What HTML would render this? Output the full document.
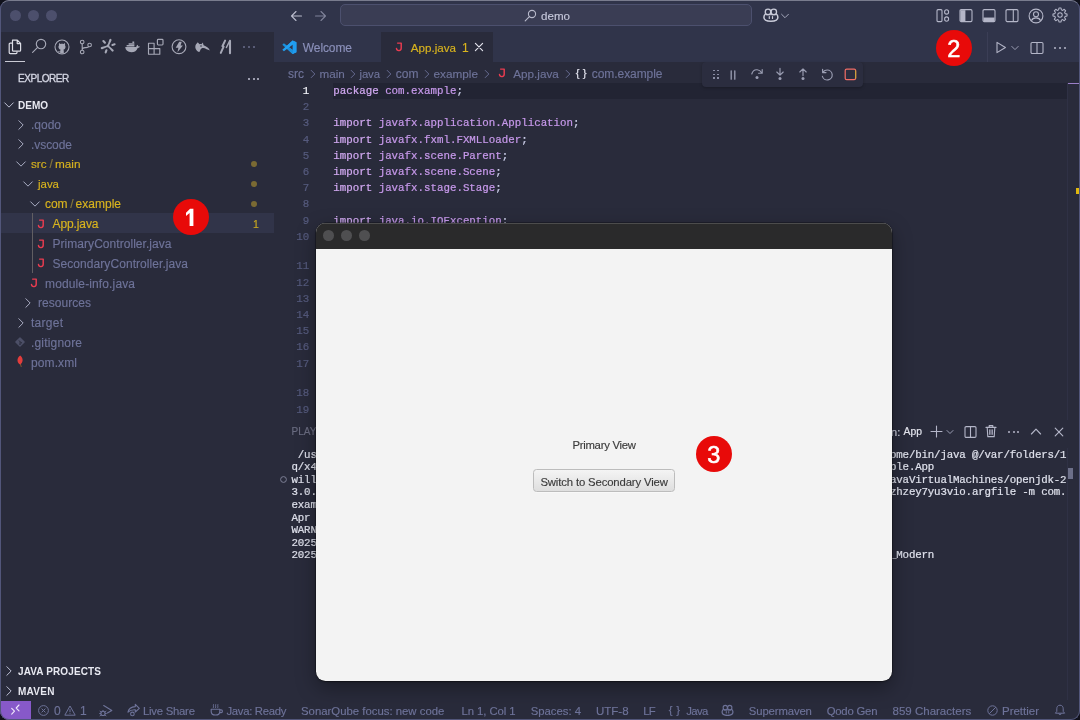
<!DOCTYPE html>
<html><head><meta charset="utf-8"><title>demo</title>
<style>
*{box-sizing:border-box;margin:0;padding:0}
html,body{width:1080px;height:720px;overflow:hidden;background:#10111b;font-family:"Liberation Sans",sans-serif;}
.b{position:absolute;display:block}
.t{position:absolute;white-space:pre;display:block}
#win{position:absolute;left:0;top:0;width:1080px;height:720px;background:#292b3b;border-radius:9px;overflow:hidden;will-change:transform}
#wb{position:absolute;left:0;top:0;width:1080px;height:720px;border:1px solid #52567a;border-top-color:#797c8e;border-radius:9px;pointer-events:none}
#fx{position:absolute;left:0;top:0;width:1080px;height:720px;will-change:transform}
#top{position:absolute;left:0;top:0;width:1080px;height:720px;will-change:transform}
.badge{position:absolute;width:36.2px;height:36.2px;border-radius:50%;background:#e80a09;color:#fff;font-weight:400;font-size:23.6px;line-height:38.2px;text-align:center;-webkit-text-stroke:.55px #fff}
</style></head><body>
<div id="win">
<div class="b" style="left:0px;top:0px;width:1080px;height:32px;background:#30344a;"></div>
<div class="b" style="left:10.0px;top:10px;width:11px;height:11px;background:#4c4f6c;border-radius:50%"></div>
<div class="b" style="left:28.0px;top:10px;width:11px;height:11px;background:#4c4f6c;border-radius:50%"></div>
<div class="b" style="left:46.0px;top:10px;width:11px;height:11px;background:#4c4f6c;border-radius:50%"></div>
<svg class="b" style="left:290px;top:10px;" width="13" height="12" viewBox="0 0 13 12" preserveAspectRatio="none"><path d="M6 1.5 L1.5 6 L6 10.5 M1.5 6 H11.5" fill="none" stroke="#b9bbcc" stroke-width="1.1" stroke-linecap="round" stroke-linejoin="round"/></svg>
<svg class="b" style="left:314px;top:10px;" width="13" height="12" viewBox="0 0 13 12" preserveAspectRatio="none"><path d="M7 1.5 L11.5 6 L7 10.5 M11.5 6 H1.5" fill="none" stroke="#7f8299" stroke-width="1.1" stroke-linecap="round" stroke-linejoin="round"/></svg>
<div class="b" style="left:340px;top:4px;width:412px;height:22px;background:#3a3d54;border:1px solid #4c506e;border-radius:5px"></div>
<svg class="b" style="left:524px;top:9px;" width="13" height="13" viewBox="0 0 13 13" preserveAspectRatio="none"><circle cx="8" cy="5" r="3.6" fill="none" stroke="#b9bbcc" stroke-width="1.1"/><path d="M5.4 7.6 L1.2 11.8" stroke="#b9bbcc" stroke-width="1.1" stroke-linecap="round"/></svg>
<svg class="b" style="left:761px;top:6px;" width="20" height="18" viewBox="761 6 20 18" preserveAspectRatio="none"><path d="M765.4 14 C764.3 15 763.9 16.2 763.9 17.3 C763.9 19.9 767 21.3 770.9 21.3 C774.8 21.3 777.9 19.9 777.9 17.3 C777.9 16.2 777.5 15 776.4 14" fill="none" stroke="#c9cbd9" stroke-width="1.5" stroke-linecap="round"/><circle cx="768" cy="11.9" r="2.75" fill="none" stroke="#c9cbd9" stroke-width="1.3"/><circle cx="773.8" cy="11.9" r="2.75" fill="none" stroke="#c9cbd9" stroke-width="1.3"/><path d="M766.2 14.7 H775.6" stroke="#c9cbd9" stroke-width="1" /><path d="M769.3 16.5 V18.4 M772.5 16.5 V18.4" stroke="#c9cbd9" stroke-width="1.2" stroke-linecap="round"/></svg>
<svg class="b" style="left:779.3px;top:9.7px;" width="12" height="12" viewBox="-6 -6 12 12" preserveAspectRatio="none"><path d="M-3.4 -1.70 L0 1.70 L3.4 -1.70" fill="none" stroke="#a4a7bb" stroke-width="1" stroke-linecap="round" stroke-linejoin="round"/></svg>
<svg class="b" style="left:936px;top:8.3px;" width="14" height="15.2" viewBox="0 0 14 14" preserveAspectRatio="none"><rect x="1" y="1.5" width="5" height="11" rx="1" fill="none" stroke="#b4b6c8" stroke-width="1.1"/><circle cx="10.6" cy="3.6" r="2" fill="none" stroke="#b4b6c8" stroke-width="1.1"/><circle cx="10.6" cy="10.2" r="2" fill="none" stroke="#b4b6c8" stroke-width="1.1"/></svg>
<svg class="b" style="left:958.5px;top:8.3px;" width="14" height="15.2" viewBox="0 0 14 14" preserveAspectRatio="none"><rect x="1" y="1.5" width="12" height="11" rx="1.2" fill="none" stroke="#b4b6c8" stroke-width="1.1"/><rect x="1.4" y="2" width="5" height="10" fill="#b4b6c8"/></svg>
<svg class="b" style="left:982px;top:8.3px;" width="14" height="15.2" viewBox="0 0 14 14" preserveAspectRatio="none"><rect x="1" y="1.5" width="12" height="11" rx="1.2" fill="none" stroke="#b4b6c8" stroke-width="1.1"/><rect x="1.5" y="8.8" width="11" height="3.3" fill="#b4b6c8"/></svg>
<svg class="b" style="left:1005px;top:8.3px;" width="14" height="15.2" viewBox="0 0 14 14" preserveAspectRatio="none"><rect x="1" y="1.5" width="12" height="11" rx="1.2" fill="none" stroke="#b4b6c8" stroke-width="1.1"/><path d="M8.3 1.5 V12.5" stroke="#b4b6c8" stroke-width="1.1"/></svg>
<svg class="b" style="left:1028px;top:7.5px;" width="16" height="16" viewBox="0 0 16 16" preserveAspectRatio="none"><circle cx="8" cy="8" r="6.9" fill="none" stroke="#b4b6c8" stroke-width="1.1"/><circle cx="8" cy="6.2" r="2.5" fill="none" stroke="#b4b6c8" stroke-width="1.1"/><path d="M3.4 12.8 C4.2 10.6 5.8 9.9 8 9.9 C10.2 9.9 11.8 10.6 12.6 12.8" fill="none" stroke="#b4b6c8" stroke-width="1.1"/></svg>
<svg class="b" style="left:1051.5px;top:7.3px;" width="16" height="16" viewBox="-8 -8 16 16" preserveAspectRatio="none"><path d="M-1.37 -5.12 L-1.05 -7.02 L1.05 -7.02 L1.37 -5.12 L2.65 -4.59 L4.22 -5.71 L5.71 -4.22 L4.59 -2.65 L5.12 -1.37 L7.02 -1.05 L7.02 1.05 L5.12 1.37 L4.59 2.65 L5.71 4.22 L4.22 5.71 L2.65 4.59 L1.37 5.12 L1.05 7.02 L-1.05 7.02 L-1.37 5.12 L-2.65 4.59 L-4.22 5.71 L-5.71 4.22 L-4.59 2.65 L-5.12 1.37 L-7.02 1.05 L-7.02 -1.05 L-5.12 -1.37 L-4.59 -2.65 L-5.71 -4.22 L-4.22 -5.71 L-2.65 -4.59Z" fill="none" stroke="#b4b6c8" stroke-width="1.05" stroke-linejoin="round"/><circle r="2.2" fill="none" stroke="#b4b6c8" stroke-width="1.05"/></svg>
<div class="b" style="left:0px;top:32px;width:274px;height:669px;background:#292b3b;"></div>
<svg class="b" style="left:7px;top:39px;" width="16" height="16" viewBox="0 0 16 16" preserveAspectRatio="none"><path d="M5.5 1.2 H10.3 L13.6 4.4 V11.2 A1 1 0 0 1 12.6 12.2 H6.5 A1 1 0 0 1 5.5 11.2 Z M10.2 1.4 V4.6 H13.4" fill="none" stroke="#dcdde6" stroke-width="1.2" stroke-linejoin="round"/><path d="M5.2 4.2 H3.2 A1 1 0 0 0 2.2 5.2 V13.6 A1 1 0 0 0 3.2 14.6 H9 A1 1 0 0 0 10 13.6 V12.4" fill="none" stroke="#dcdde6" stroke-width="1.2" stroke-linejoin="round"/></svg>
<div class="b" style="left:5px;top:60.6px;width:20px;height:1.4px;background:#c9cad4;"></div>
<svg class="b" style="left:30.6px;top:38.4px;" width="16" height="16" viewBox="0 0 16 16" preserveAspectRatio="none"><circle cx="10" cy="6" r="4.7" fill="none" stroke="#a6a8b6" stroke-width="1.15"/><path d="M6.6 9.4 L1.6 14.4" stroke="#a6a8b6" stroke-width="1.15" stroke-linecap="round"/></svg>
<svg class="b" style="left:54px;top:39px;" width="16" height="16" viewBox="0 0 16 16" preserveAspectRatio="none"><circle cx="8" cy="8" r="7" fill="none" stroke="#a6a8b6" stroke-width="1.1"/><path d="M5.2 4.1 L6.4 5 C7.4 4.7 8.6 4.7 9.6 5 L10.8 4.1 C11.2 5 11.2 5.6 11 6.2 C11.6 7 11.7 8 11.3 9 C10.9 10 10.1 10.5 9.4 10.7 C9.8 11.2 9.8 11.8 9.8 12.4 V14.4 H6.2 V13.2 C5.2 13.5 4.5 13 4.1 12 L4.8 12 C5.2 12.5 5.6 12.6 6.2 12.4 C6.2 11.8 6.3 11.2 6.6 10.7 C5.9 10.5 5.1 10 4.7 9 C4.3 8 4.4 7 5 6.2 C4.8 5.6 4.8 5 5.2 4.1Z" fill="#a6a8b6"/></svg>
<svg class="b" style="left:78px;top:38.8px;" width="16" height="16" viewBox="0 0 16 16" preserveAspectRatio="none"><circle cx="4.2" cy="3" r="1.8" fill="none" stroke="#a6a8b6" stroke-width="1.1"/><circle cx="4.2" cy="13" r="1.8" fill="none" stroke="#a6a8b6" stroke-width="1.1"/><circle cx="11.6" cy="6" r="1.8" fill="none" stroke="#a6a8b6" stroke-width="1.1"/><path d="M4.2 4.8 V11.2 M4.2 10.4 C4.2 8.6 6 8.8 8 8.6 C9.8 8.4 10.6 8 11 7.6" fill="none" stroke="#a6a8b6" stroke-width="1.1"/></svg>
<svg class="b" style="left:100.3px;top:38.3px;" width="16" height="16" viewBox="-8 -8 16 16" preserveAspectRatio="none"><path d="M-0.7 -0.4 L-1.1 -6.5 A1.1 1.1 0 0 1 1.1 -6.5 L0.7 -0.4Z" fill="#a6a8b6" transform="rotate(22)"/><path d="M-0.7 -0.4 L-1.1 -6.5 A1.1 1.1 0 0 1 1.1 -6.5 L0.7 -0.4Z" fill="#a6a8b6" transform="rotate(135)"/><path d="M-0.7 -0.4 L-1.1 -6.5 A1.1 1.1 0 0 1 1.1 -6.5 L0.7 -0.4Z" fill="#a6a8b6" transform="rotate(251)"/><path d="M0 -4.5 L0 -6.8" stroke="#a6a8b6" stroke-width="2.1" stroke-linecap="round" transform="rotate(76)"/><path d="M0 -4.5 L0 -6.8" stroke="#a6a8b6" stroke-width="2.1" stroke-linecap="round" transform="rotate(200)"/><path d="M0 -4.5 L0 -6.8" stroke="#a6a8b6" stroke-width="2.1" stroke-linecap="round" transform="rotate(317)"/><circle r="1.4" fill="#a6a8b6"/></svg>
<svg class="b" style="left:124px;top:40px;" width="17" height="14" viewBox="124 40 17 14" preserveAspectRatio="none"><path d="M125.2 47 H136.2 C136.3 46 136.8 45.2 137.5 44.7 C138 45.2 138.2 45.8 138.1 46.4 C138.7 46.2 139.4 46.3 139.8 46.7 C139.4 47.5 138.6 47.9 137.7 47.9 C136.8 50.6 134.6 52.2 131.3 52.2 C127.8 52.2 125.5 50.4 125.2 47Z M126.6 45.1 H134.4 V46.6 H126.6Z M128.6 43.3 H134.4 V44.7 H128.6Z M132.4 41.6 H134.2 V42.9 H132.4Z" fill="#a6a8b6"/></svg>
<svg class="b" style="left:146px;top:37px;" width="19" height="19" viewBox="146 37 19 19" preserveAspectRatio="none"><path d="M148.5 43.2 H154.1 V48.6 H159.8 V54.2 H148.5Z M148.5 48.6 H154.1 V54.2" fill="none" stroke="#a6a8b6" stroke-width="1.15" stroke-linejoin="round"/><rect x="157.4" y="39.4" width="5.6" height="5.6" rx=".9" fill="none" stroke="#a6a8b6" stroke-width="1.15"/></svg>
<svg class="b" style="left:170px;top:38px;" width="18" height="18" viewBox="170 38 18 18" preserveAspectRatio="none"><circle cx="179" cy="46.7" r="6.9" fill="none" stroke="#a6a8b6" stroke-width="1.1"/><path d="M179.2 41.8 H181.8 L180.5 45.5 H182.9 L177.5 52.3 L178.4 47.7 H175.7Z" fill="#a6a8b6"/></svg>
<svg class="b" style="left:193px;top:40px;" width="19" height="14" viewBox="193 40 19 14" preserveAspectRatio="none"><path d="M197.7 42.2 L199.6 44.2 C200.2 44 200.8 44 201.4 44.2 L202.8 42.6 L203.6 45.2 C205 45.8 206.4 46.6 207.6 47.6 C208.6 48.4 209.4 49.4 209.8 50.4 C208.6 50 207.6 49.6 206.6 49.2 C205.4 48.4 204.2 48 203.2 48 C202 48 201 48.6 200.6 49.4 C200.2 50.2 199.9 51.2 199.4 52.1 C198.6 51.9 197.8 51.5 197.2 50.9 C196 49.8 195.3 48.4 195.3 47 C195.3 45.8 195.6 44.8 196.2 44 C196.8 43.4 197.3 42.8 197.7 42.2Z" fill="#a6a8b6"/><circle cx="201" cy="46.1" r=".75" fill="#292b3b"/></svg>
<svg class="b" style="left:218px;top:38px;" width="16" height="18" viewBox="218 38 16 18" preserveAspectRatio="none"><path d="M225.1 40.6 L222.4 46.2 M223.6 46.6 L220.8 52.9" stroke="#a6a8b6" stroke-width="2" stroke-linecap="round" fill="none"/><path d="M230 40.9 V53.2" stroke="#a6a8b6" stroke-width="2.1" stroke-linecap="round"/><path d="M229.6 41.2 L226.4 47.5" stroke="#a6a8b6" stroke-width="1.5" stroke-linecap="round"/></svg>
<div class="b" style="left:243.4px;top:46.2px;width:2px;height:2px;background:#6a6e8d;border-radius:50%"></div>
<div class="b" style="left:248px;top:46.2px;width:2px;height:2px;background:#6a6e8d;border-radius:50%"></div>
<div class="b" style="left:252.6px;top:46.2px;width:2px;height:2px;background:#6a6e8d;border-radius:50%"></div>
<div class="b" style="left:247.9px;top:77.7px;width:2px;height:2px;background:#c3c5d6;border-radius:50%"></div>
<div class="b" style="left:252.5px;top:77.7px;width:2px;height:2px;background:#c3c5d6;border-radius:50%"></div>
<div class="b" style="left:257.1px;top:77.7px;width:2px;height:2px;background:#c3c5d6;border-radius:50%"></div>
<svg class="b" style="left:2.8000000000000007px;top:98.6px;" width="12" height="12" viewBox="-6 -6 12 12" preserveAspectRatio="none"><path d="M-4.3 -2.15 L0 2.15 L4.3 -2.15" fill="none" stroke="#bcbfd2" stroke-width="1" stroke-linecap="round" stroke-linejoin="round"/></svg>
<div class="b" style="left:0px;top:213px;width:274px;height:20px;background:#313449;"></div>
<div class="b" style="left:32px;top:213px;width:1px;height:59.5px;background:#615e62;"></div>
<svg class="b" style="left:15.2px;top:118.5px;" width="12" height="12" viewBox="-6 -6 12 12" preserveAspectRatio="none"><path d="M-2.15 -4.3 L2.15 0 L-2.15 4.3" fill="none" stroke="#a9acc2" stroke-width="1" stroke-linecap="round" stroke-linejoin="round"/></svg>
<svg class="b" style="left:15.2px;top:138.33px;" width="12" height="12" viewBox="-6 -6 12 12" preserveAspectRatio="none"><path d="M-2.15 -4.3 L2.15 0 L-2.15 4.3" fill="none" stroke="#a9acc2" stroke-width="1" stroke-linecap="round" stroke-linejoin="round"/></svg>
<svg class="b" style="left:14.600000000000001px;top:158.06px;" width="12" height="12" viewBox="-6 -6 12 12" preserveAspectRatio="none"><path d="M-4.3 -2.15 L0 2.15 L4.3 -2.15" fill="none" stroke="#a9acc2" stroke-width="1" stroke-linecap="round" stroke-linejoin="round"/></svg>
<svg class="b" style="left:21.6px;top:177.89px;" width="12" height="12" viewBox="-6 -6 12 12" preserveAspectRatio="none"><path d="M-4.3 -2.15 L0 2.15 L4.3 -2.15" fill="none" stroke="#a9acc2" stroke-width="1" stroke-linecap="round" stroke-linejoin="round"/></svg>
<svg class="b" style="left:28.6px;top:197.71999999999997px;" width="12" height="12" viewBox="-6 -6 12 12" preserveAspectRatio="none"><path d="M-4.3 -2.15 L0 2.15 L4.3 -2.15" fill="none" stroke="#a9acc2" stroke-width="1" stroke-linecap="round" stroke-linejoin="round"/></svg>
<svg class="b" style="left:37.1px;top:218.74999999999997px;" width="8" height="10" viewBox="0 0 8 10" preserveAspectRatio="none"><path d="M2.6 1.1 H6.2 V6 A2.35 2.35 0 0 1 1.5 6.5" fill="none" stroke="#ea3c50" stroke-width="1.45" stroke-linecap="round" stroke-linejoin="round"/></svg>
<svg class="b" style="left:37.1px;top:238.57999999999996px;" width="8" height="10" viewBox="0 0 8 10" preserveAspectRatio="none"><path d="M2.6 1.1 H6.2 V6 A2.35 2.35 0 0 1 1.5 6.5" fill="none" stroke="#ea3c50" stroke-width="1.45" stroke-linecap="round" stroke-linejoin="round"/></svg>
<svg class="b" style="left:37.1px;top:258.4099999999999px;" width="8" height="10" viewBox="0 0 8 10" preserveAspectRatio="none"><path d="M2.6 1.1 H6.2 V6 A2.35 2.35 0 0 1 1.5 6.5" fill="none" stroke="#ea3c50" stroke-width="1.45" stroke-linecap="round" stroke-linejoin="round"/></svg>
<svg class="b" style="left:29.6px;top:278.2399999999999px;" width="8" height="10" viewBox="0 0 8 10" preserveAspectRatio="none"><path d="M2.6 1.1 H6.2 V6 A2.35 2.35 0 0 1 1.5 6.5" fill="none" stroke="#ea3c50" stroke-width="1.45" stroke-linecap="round" stroke-linejoin="round"/></svg>
<svg class="b" style="left:22.2px;top:296.9699999999999px;" width="12" height="12" viewBox="-6 -6 12 12" preserveAspectRatio="none"><path d="M-2.15 -4.3 L2.15 0 L-2.15 4.3" fill="none" stroke="#a9acc2" stroke-width="1" stroke-linecap="round" stroke-linejoin="round"/></svg>
<svg class="b" style="left:15.2px;top:316.7999999999999px;" width="12" height="12" viewBox="-6 -6 12 12" preserveAspectRatio="none"><path d="M-2.15 -4.3 L2.15 0 L-2.15 4.3" fill="none" stroke="#a9acc2" stroke-width="1" stroke-linecap="round" stroke-linejoin="round"/></svg>
<svg class="b" style="left:13.6px;top:336.4299999999999px;" width="12" height="12" viewBox="-6 -6 12 12" preserveAspectRatio="none"><rect x="-3.6" y="-3.6" width="7.2" height="7.2" rx=".7" fill="#4c4f67" transform="rotate(45)"/><path d="M-1.4 -1.6 L1.2 0.6 M0 -0.4 V2.2" stroke="#2d2f40" stroke-width=".9"/><circle cx="1.3" cy=".7" r=".8" fill="#2d2f40"/><circle cx="0" cy="2.2" r=".8" fill="#2d2f40"/></svg>
<svg class="b" style="left:14.7px;top:354.15999999999985px;" width="10" height="14" viewBox="-5 -8 10 14" preserveAspectRatio="none"><path d="M0.3 1.6 L1.2 4.6" stroke="#8a5a30" stroke-width=".9" stroke-linecap="round"/><path d="M0.2 -6.6 C1.8 -5.6 2.8 -3.6 2.6 -1.6 C2.4 0.2 1.4 1.8 0.2 2.4 C-1.2 1.8 -2.4 0.4 -2.5 -1.6 C-2.6 -3.6 -1.6 -5.6 0.2 -6.6Z" fill="#e33d3c"/></svg>
<div class="b" style="left:250.5px;top:160.9px;width:6px;height:6px;background:#7a6a33;border-radius:50%"></div>
<div class="b" style="left:250.5px;top:180.7px;width:6px;height:6px;background:#7a6a33;border-radius:50%"></div>
<div class="b" style="left:250.5px;top:200.5px;width:6px;height:6px;background:#7a6a33;border-radius:50%"></div>
<svg class="b" style="left:2.8000000000000007px;top:664.9px;" width="12" height="12" viewBox="-6 -6 12 12" preserveAspectRatio="none"><path d="M-2.15 -4.3 L2.15 0 L-2.15 4.3" fill="none" stroke="#bcbfd2" stroke-width="1" stroke-linecap="round" stroke-linejoin="round"/></svg>
<svg class="b" style="left:2.8000000000000007px;top:684.7px;" width="12" height="12" viewBox="-6 -6 12 12" preserveAspectRatio="none"><path d="M-2.15 -4.3 L2.15 0 L-2.15 4.3" fill="none" stroke="#bcbfd2" stroke-width="1" stroke-linecap="round" stroke-linejoin="round"/></svg>
<div class="b" style="left:274px;top:32px;width:806px;height:30px;background:#30344a;"></div>
<div class="b" style="left:381px;top:32px;width:112px;height:30px;background:#292b3b;"></div>
<svg class="b" style="left:282.4px;top:39.8px;" width="15" height="14.4" viewBox="0 0 15 14" preserveAspectRatio="none"><path d="M10.6 0.4 L14.4 2.2 V11.8 L10.6 13.6 L3.6 7 Z" fill="#2aa5f5"/><path d="M10.6 0.4 L14.4 2.2 V11.8 L10.6 13.6 Z" fill="#1f9cf0"/><path d="M10.6 4.2 L6.8 7 L10.6 9.8Z" fill="#30344a"/><path d="M1.9 3.1 L0.3 4.5 L10.6 13.6 L11.2 9.9Z" fill="#1a90dd"/><path d="M1.9 10.9 L0.3 9.5 L10.6 0.4 L11.2 4.1Z" fill="#22a0f2"/></svg>
<svg class="b" style="left:395.40000000000003px;top:42.4px;" width="8" height="10" viewBox="0 0 8 10" preserveAspectRatio="none"><path d="M2.6 1.1 H6.2 V6 A2.35 2.35 0 0 1 1.5 6.5" fill="none" stroke="#ea3c50" stroke-width="1.45" stroke-linecap="round" stroke-linejoin="round"/></svg>
<svg class="b" style="left:474.4px;top:42.2px;" width="10" height="10" viewBox="0 0 10 10" preserveAspectRatio="none"><path d="M1.4 1.4 L8.6 8.6 M8.6 1.4 L1.4 8.6" stroke="#e4e5ee" stroke-width="1.15" stroke-linecap="round"/></svg>
<div class="b" style="left:987px;top:32px;width:1px;height:30px;background:#3b3e56;"></div>
<svg class="b" style="left:994.5px;top:41px;" width="12" height="13" viewBox="0 0 12 13" preserveAspectRatio="none"><path d="M2 1.4 L10.4 6.5 L2 11.6Z" fill="none" stroke="#b4b6c8" stroke-width="1.1" stroke-linejoin="round"/></svg>
<svg class="b" style="left:1009px;top:41.8px;" width="12" height="12" viewBox="-6 -6 12 12" preserveAspectRatio="none"><path d="M-3.2 -1.60 L0 1.60 L3.2 -1.60" fill="none" stroke="#9a9db3" stroke-width="1" stroke-linecap="round" stroke-linejoin="round"/></svg>
<svg class="b" style="left:1029.5px;top:40.5px;" width="14" height="14" viewBox="0 0 14 14" preserveAspectRatio="none"><rect x="1" y="1.5" width="12" height="11" rx="1.2" fill="none" stroke="#b4b6c8" stroke-width="1.1"/><path d="M7 1.5 V12.5" stroke="#b4b6c8" stroke-width="1.1"/></svg>
<div class="b" style="left:1054.4px;top:46.6px;width:2px;height:2px;background:#b4b6c8;border-radius:50%"></div>
<div class="b" style="left:1059px;top:46.6px;width:2px;height:2px;background:#b4b6c8;border-radius:50%"></div>
<div class="b" style="left:1063.6px;top:46.6px;width:2px;height:2px;background:#b4b6c8;border-radius:50%"></div>
<div class="b" style="left:274px;top:62px;width:806px;height:21px;background:#292b3b;"></div>
<svg class="b" style="left:306.8px;top:68px;" width="12" height="12" viewBox="-6 -6 12 12" preserveAspectRatio="none"><path d="M-1.80 -3.6 L1.80 0 L-1.80 3.6" fill="none" stroke="#656a90" stroke-width="1" stroke-linecap="round" stroke-linejoin="round"/></svg>
<svg class="b" style="left:346.8px;top:68px;" width="12" height="12" viewBox="-6 -6 12 12" preserveAspectRatio="none"><path d="M-1.80 -3.6 L1.80 0 L-1.80 3.6" fill="none" stroke="#656a90" stroke-width="1" stroke-linecap="round" stroke-linejoin="round"/></svg>
<svg class="b" style="left:382.8px;top:68px;" width="12" height="12" viewBox="-6 -6 12 12" preserveAspectRatio="none"><path d="M-1.80 -3.6 L1.80 0 L-1.80 3.6" fill="none" stroke="#656a90" stroke-width="1" stroke-linecap="round" stroke-linejoin="round"/></svg>
<svg class="b" style="left:420.8px;top:68px;" width="12" height="12" viewBox="-6 -6 12 12" preserveAspectRatio="none"><path d="M-1.80 -3.6 L1.80 0 L-1.80 3.6" fill="none" stroke="#656a90" stroke-width="1" stroke-linecap="round" stroke-linejoin="round"/></svg>
<svg class="b" style="left:480.8px;top:68px;" width="12" height="12" viewBox="-6 -6 12 12" preserveAspectRatio="none"><path d="M-1.80 -3.6 L1.80 0 L-1.80 3.6" fill="none" stroke="#656a90" stroke-width="1" stroke-linecap="round" stroke-linejoin="round"/></svg>
<svg class="b" style="left:497.6px;top:68.4px;" width="8" height="10" viewBox="0 0 8 10" preserveAspectRatio="none"><path d="M2.6 1.1 H6.2 V6 A2.35 2.35 0 0 1 1.5 6.5" fill="none" stroke="#ea3c50" stroke-width="1.45" stroke-linecap="round" stroke-linejoin="round"/></svg>
<svg class="b" style="left:562.3px;top:68px;" width="12" height="12" viewBox="-6 -6 12 12" preserveAspectRatio="none"><path d="M-1.80 -3.6 L1.80 0 L-1.80 3.6" fill="none" stroke="#656a90" stroke-width="1" stroke-linecap="round" stroke-linejoin="round"/></svg>
<div class="b" style="left:333px;top:83px;width:734px;height:16px;background:#222433;"></div>
<div class="b" style="left:1067px;top:83px;width:1px;height:337px;background:#2f3145;"></div>
<div class="b" style="left:1068px;top:83px;width:12px;height:1.2px;background:#9b80c8;"></div>
<div class="b" style="left:1076px;top:188px;width:4px;height:6px;background:#e0b80e;"></div>
<div class="b" style="left:702px;top:62px;width:161px;height:24.5px;background:#2b2d3f;border-radius:4px;box-shadow:0 1px 3px rgba(0,0,0,.25)"></div>
<div class="b" style="left:713.45px;top:69.85px;width:1.5px;height:1.5px;background:#8a8da3;"></div>
<div class="b" style="left:713.45px;top:73.55px;width:1.5px;height:1.5px;background:#8a8da3;"></div>
<div class="b" style="left:713.45px;top:77.25px;width:1.5px;height:1.5px;background:#8a8da3;"></div>
<div class="b" style="left:717.05px;top:69.85px;width:1.5px;height:1.5px;background:#8a8da3;"></div>
<div class="b" style="left:717.05px;top:73.55px;width:1.5px;height:1.5px;background:#8a8da3;"></div>
<div class="b" style="left:717.05px;top:77.25px;width:1.5px;height:1.5px;background:#8a8da3;"></div>
<svg class="b" style="left:727px;top:68.5px;" width="12" height="12" viewBox="0 0 12 12" preserveAspectRatio="none"><path d="M4.2 1.8 V10.2 M7.8 1.8 V10.2" stroke="#9b9eb3" stroke-width="1.3" stroke-linecap="round"/></svg>
<svg class="b" style="left:749.5px;top:67px;" width="14" height="14" viewBox="0 0 14 14" preserveAspectRatio="none"><path d="M1.8 7 C2.6 3.8 5 2.6 7.2 2.8 C9.2 3 10.6 4 11.6 5.8 M12.2 2.6 V6.2 H8.6" fill="none" stroke="#9b9eb3" stroke-width="1.15" stroke-linecap="round" stroke-linejoin="round"/><circle cx="7" cy="10.6" r="1.5" fill="#9b9eb3"/></svg>
<svg class="b" style="left:773px;top:67px;" width="14" height="14" viewBox="0 0 14 14" preserveAspectRatio="none"><path d="M7 1.4 V8 M3.8 5 L7 8.2 L10.2 5" fill="none" stroke="#9b9eb3" stroke-width="1.15" stroke-linecap="round" stroke-linejoin="round"/><circle cx="7" cy="11.4" r="1.5" fill="#9b9eb3"/></svg>
<svg class="b" style="left:796px;top:67px;" width="14" height="14" viewBox="0 0 14 14" preserveAspectRatio="none"><path d="M7 8.6 V2 M3.8 5 L7 1.8 L10.2 5" fill="none" stroke="#9b9eb3" stroke-width="1.15" stroke-linecap="round" stroke-linejoin="round"/><circle cx="7" cy="11.4" r="1.5" fill="#9b9eb3"/></svg>
<svg class="b" style="left:819.5px;top:67.5px;" width="14" height="14" viewBox="0 0 14 14" preserveAspectRatio="none"><path d="M3 4.2 C4 2.8 5.4 2 7.2 2 A5 5 0 1 1 2.4 8.4 M2.6 1.2 V4.6 H6" fill="none" stroke="#9b9eb3" stroke-width="1.15" stroke-linecap="round" stroke-linejoin="round"/></svg>
<svg class="b" style="left:843.5px;top:68px;" width="13" height="13" viewBox="0 0 13 13" preserveAspectRatio="none"><rect x="1.2" y="1.2" width="10.4" height="10.4" rx="1.4" fill="none" stroke="#f26d66" stroke-width="1.2"/><path d="M11.6 2.6 V10.4" stroke="#caa23a" stroke-width="1.2"/></svg>
<div class="b" style="left:274px;top:420px;width:806px;height:281px;background:#292b3b;"></div>
<svg class="b" style="left:929.5px;top:424.5px;" width="13" height="13" viewBox="0 0 13 13" preserveAspectRatio="none"><path d="M6.5 1 V12 M1 6.5 H12" stroke="#b4b6c8" stroke-width="1.1" stroke-linecap="round"/></svg>
<svg class="b" style="left:944px;top:425.8px;" width="12" height="12" viewBox="-6 -6 12 12" preserveAspectRatio="none"><path d="M-3 -1.50 L0 1.50 L3 -1.50" fill="none" stroke="#9a9db3" stroke-width="1" stroke-linecap="round" stroke-linejoin="round"/></svg>
<svg class="b" style="left:964px;top:424.5px;" width="13" height="14" viewBox="0 0 13 14" preserveAspectRatio="none"><rect x="1" y="1.6" width="11" height="10.8" rx="1.2" fill="none" stroke="#b4b6c8" stroke-width="1.1"/><path d="M6.5 1.6 V12.4" stroke="#b4b6c8" stroke-width="1.1"/></svg>
<svg class="b" style="left:985px;top:424px;" width="12" height="14" viewBox="0 0 12 14" preserveAspectRatio="none"><path d="M1 3.4 H11 M4.2 3.2 V1.6 H7.8 V3.2 M2.2 3.6 L2.8 12.6 H9.2 L9.8 3.6" fill="none" stroke="#b4b6c8" stroke-width="1.1" stroke-linecap="round" stroke-linejoin="round"/><path d="M4.6 5.4 V10.8 M6 5.4 V10.8 M7.4 5.4 V10.8" stroke="#b4b6c8" stroke-width=".9"/></svg>
<div class="b" style="left:1007.9px;top:430.6px;width:2px;height:2px;background:#b4b6c8;border-radius:50%"></div>
<div class="b" style="left:1012.5px;top:430.6px;width:2px;height:2px;background:#b4b6c8;border-radius:50%"></div>
<div class="b" style="left:1017.1px;top:430.6px;width:2px;height:2px;background:#b4b6c8;border-radius:50%"></div>
<svg class="b" style="left:1030px;top:426.5px;" width="12" height="9" viewBox="0 0 12 9" preserveAspectRatio="none"><path d="M1.4 7 L6 2.2 L10.6 7" fill="none" stroke="#b4b6c8" stroke-width="1.15" stroke-linecap="round" stroke-linejoin="round"/></svg>
<svg class="b" style="left:1054px;top:426.5px;" width="10" height="10" viewBox="0 0 10 10" preserveAspectRatio="none"><path d="M1.2 1.2 L8.8 8.8 M8.8 1.2 L1.2 8.8" stroke="#b4b6c8" stroke-width="1.15" stroke-linecap="round"/></svg>
<div class="b" style="left:1067px;top:448px;width:1px;height:252px;background:#2f3145;"></div>
<div class="b" style="left:1068px;top:468px;width:4.5px;height:10.5px;background:#6c6f88;"></div>
<svg class="b" style="left:278.5px;top:474.8px;" width="9" height="9" viewBox="0 0 9 9" preserveAspectRatio="none"><circle cx="4.5" cy="4.5" r="2.9" fill="none" stroke="#7d8096" stroke-width="1"/></svg>
<div class="b" style="left:0px;top:701px;width:1080px;height:19px;background:#292b3b;"></div>
<div class="b" style="left:0px;top:701px;width:31px;height:19px;background:#8759c9;"></div>
<svg class="b" style="left:8px;top:702px;" width="16" height="16" viewBox="8 702 16 16" preserveAspectRatio="none"><path d="M11.7 708.3 L14.5 711.2 L11.7 714.2 M19 705 L16.2 708 L19 710.9" fill="none" stroke="#efe6fb" stroke-width="1.1" stroke-linecap="round" stroke-linejoin="round"/></svg>
<svg class="b" style="left:38.4px;top:704.7px;" width="11" height="11" viewBox="0 0 11 11" preserveAspectRatio="none"><circle cx="5.5" cy="5.5" r="4.9" fill="none" stroke="#6e7399" stroke-width="1"/><path d="M3.6 3.6 L7.4 7.4 M7.4 3.6 L3.6 7.4" stroke="#6e7399" stroke-width="1"/></svg>
<svg class="b" style="left:63.5px;top:704.8px;" width="12" height="11" viewBox="0 0 12 11" preserveAspectRatio="none"><path d="M6 1 L11.2 10.2 H0.8Z" fill="none" stroke="#6e7399" stroke-width="1" stroke-linejoin="round"/><path d="M6 4.2 V7.2 M6 8.3 V9" stroke="#6e7399" stroke-width="1"/></svg>
<svg class="b" style="left:98px;top:702px;" width="16" height="17" viewBox="98 702 16 17" preserveAspectRatio="none"><path d="M103.7 705.5 L111.8 710.4 L107.4 713" fill="none" stroke="#6e7399" stroke-width="1.15" stroke-linejoin="round" stroke-linecap="round"/><circle cx="103" cy="713.4" r="2.1" fill="none" stroke="#6e7399" stroke-width="1.1"/><path d="M100 711.2 L101.1 712 M99.6 713.5 H100.6 M100 715.8 L101.1 715 M106 711.2 L104.9 712 M106.4 713.5 H105.4 M106 715.8 L104.9 715 M103 710.4 V711.2" stroke="#6e7399" stroke-width=".9" stroke-linecap="round"/></svg>
<svg class="b" style="left:126px;top:702px;" width="16" height="17" viewBox="126 702 16 17" preserveAspectRatio="none"><path d="M135.3 704.4 L139.3 708.3 L135.3 712 V709.8 C132 709.6 129.8 710.4 128 712.2 C128.6 708.8 131 706.8 135.3 706.6Z" fill="none" stroke="#6e7399" stroke-width="1.15" stroke-linejoin="round"/><circle cx="132.4" cy="713.9" r="1.8" fill="none" stroke="#6e7399" stroke-width="1.1"/></svg>
<svg class="b" style="left:209px;top:702px;" width="16" height="17" viewBox="209 702 16 17" preserveAspectRatio="none"><path d="M211.2 709.2 H219.8 V711.4 C219.8 713.6 218 715 215.5 715 C213 715 211.2 713.6 211.2 711.4Z M219.8 709.9 H221.2 C222.8 709.9 222.8 712.6 221.2 712.6 H219.6" fill="none" stroke="#6e7399" stroke-width="1.15" stroke-linejoin="round"/><path d="M213.4 704.6 C212.9 705.6 214 706.4 213.4 707.6 M215.6 704.6 C215.1 705.6 216.2 706.4 215.6 707.6 M217.8 704.6 C217.3 705.6 218.4 706.4 217.8 707.6" fill="none" stroke="#6e7399" stroke-width=".9" stroke-linecap="round"/></svg>
<svg class="b" style="left:721.3px;top:704px;" width="13.2" height="12.4" viewBox="762.5 7.5 17 15" preserveAspectRatio="none"><path d="M765.4 14 C764.3 15 763.9 16.2 763.9 17.3 C763.9 19.9 767 21.3 770.9 21.3 C774.8 21.3 777.9 19.9 777.9 17.3 C777.9 16.2 777.5 15 776.4 14" fill="none" stroke="#6e7399" stroke-width="1.6" stroke-linecap="round"/><circle cx="768" cy="11.9" r="2.75" fill="none" stroke="#6e7399" stroke-width="1.4"/><circle cx="773.8" cy="11.9" r="2.75" fill="none" stroke="#6e7399" stroke-width="1.4"/><path d="M766.2 14.7 H775.6" stroke="#6e7399" stroke-width="1.1" /><path d="M769.3 16.5 V18.4 M772.5 16.5 V18.4" stroke="#6e7399" stroke-width="1.3" stroke-linecap="round"/></svg>
<svg class="b" style="left:986.5px;top:705px;" width="11" height="11" viewBox="0 0 11 11" preserveAspectRatio="none"><circle cx="5.5" cy="5.5" r="4.7" fill="none" stroke="#6e7399" stroke-width="1"/><path d="M2.2 8.8 L8.8 2.2" stroke="#6e7399" stroke-width="1"/></svg>
<svg class="b" style="left:1054.2px;top:703.8px;" width="12" height="12" viewBox="0 0 12 12" preserveAspectRatio="none"><path d="M6 1.2 C3.8 1.2 2.8 2.8 2.8 4.8 V7.4 L1.4 9.2 H10.6 L9.2 7.4 V4.8 C9.2 2.8 8.2 1.2 6 1.2Z M4.8 9.4 C4.8 11 7.2 11 7.2 9.4" fill="none" stroke="#6e7399" stroke-width="1" stroke-linejoin="round"/></svg>
<span class="t" style="left:541px;top:7.25px;font-size:11.59px;line-height:18px;color:#c5c7da;-webkit-text-stroke:0.15px #c5c7da;">demo</span>
<span class="t" style="left:18px;top:71.05px;font-size:10.02px;line-height:16px;color:#d4d6e3;letter-spacing:-0.461px;-webkit-text-stroke:.3px #d4d6e3;">EXPLORER</span>
<span class="t" style="left:18px;top:97.55px;font-size:10px;line-height:15px;color:#e8e9f1;font-weight:700;">DEMO</span>
<span class="t" style="left:31px;top:115.95px;font-size:12px;line-height:18px;color:#6e7399;letter-spacing:-0.008px;-webkit-text-stroke:0.15px #6e7399;">.qodo</span>
<span class="t" style="left:31px;top:135.78px;font-size:12px;line-height:18px;color:#6e7399;letter-spacing:-0.06px;-webkit-text-stroke:0.15px #6e7399;">.vscode</span>
<span class="t" style="left:38px;top:175.44px;font-size:11.45px;line-height:18px;color:#d9b41e;-webkit-text-stroke:0.15px #d9b41e;">java</span>
<span class="t" style="left:52.5px;top:215.10px;font-size:12px;line-height:18px;color:#d9b41e;letter-spacing:-0.1px;-webkit-text-stroke:0.15px #d9b41e;">App.java</span>
<span class="t" style="left:52.5px;top:234.93px;font-size:12px;line-height:18px;color:#6e7399;letter-spacing:0.045px;-webkit-text-stroke:0.15px #6e7399;">PrimaryController.java</span>
<span class="t" style="left:52.5px;top:254.76px;font-size:12px;line-height:18px;color:#6e7399;letter-spacing:0.062px;-webkit-text-stroke:0.15px #6e7399;">SecondaryController.java</span>
<span class="t" style="left:45px;top:274.59px;font-size:12px;line-height:18px;color:#6e7399;letter-spacing:0.129px;-webkit-text-stroke:0.15px #6e7399;">module-info.java</span>
<span class="t" style="left:38px;top:294.42px;font-size:12px;line-height:18px;color:#6e7399;letter-spacing:0.039px;-webkit-text-stroke:0.15px #6e7399;">resources</span>
<span class="t" style="left:31px;top:314.25px;font-size:12px;line-height:18px;color:#6e7399;letter-spacing:0.263px;-webkit-text-stroke:0.15px #6e7399;">target</span>
<span class="t" style="left:31px;top:334.08px;font-size:12px;line-height:18px;color:#6e7399;letter-spacing:0.181px;-webkit-text-stroke:0.15px #6e7399;">.gitignore</span>
<span class="t" style="left:31px;top:353.91px;font-size:12px;line-height:18px;color:#6e7399;letter-spacing:0.109px;-webkit-text-stroke:0.15px #6e7399;">pom.xml</span>
<span class="t" style="left:31px;top:155.15px;font-size:11.62px;line-height:18px;color:#d9b41e;-webkit-text-stroke:0.15px #d9b41e;">src</span>
<span class="t" style="left:49.5px;top:155.15px;font-size:12px;line-height:18px;color:#8a7a3a;-webkit-text-stroke:0.15px #8a7a3a;">/</span>
<span class="t" style="left:55px;top:155.15px;font-size:11.76px;line-height:18px;color:#d9b41e;-webkit-text-stroke:0.15px #d9b41e;">main</span>
<span class="t" style="left:45px;top:195.25px;font-size:12px;line-height:18px;color:#d9b41e;letter-spacing:-0.086px;-webkit-text-stroke:0.15px #d9b41e;">com</span>
<span class="t" style="left:70.3px;top:195.25px;font-size:12px;line-height:18px;color:#8a7a3a;-webkit-text-stroke:0.15px #8a7a3a;">/</span>
<span class="t" style="left:75.5px;top:195.25px;font-size:12px;line-height:18px;color:#d9b41e;letter-spacing:0.023px;-webkit-text-stroke:0.15px #d9b41e;">example</span>
<span class="t" style="left:253px;top:216.05px;font-size:10.5px;line-height:16px;color:#c9a81f;-webkit-text-stroke:0.15px #c9a81f;">1</span>
<span class="t" style="left:18px;top:664.05px;font-size:10px;line-height:15px;color:#e8e9f1;font-weight:700;letter-spacing:0.125px;">JAVA PROJECTS</span>
<span class="t" style="left:18px;top:683.85px;font-size:10px;line-height:15px;color:#e8e9f1;font-weight:700;letter-spacing:0.281px;">MAVEN</span>
<span class="t" style="left:302.8px;top:38.95px;font-size:12px;line-height:18px;color:#8b90ba;letter-spacing:-0.099px;-webkit-text-stroke:0.15px #8b90ba;">Welcome</span>
<span class="t" style="left:410.8px;top:38.95px;font-size:11.61px;line-height:18px;color:#d9b41e;-webkit-text-stroke:0.15px #d9b41e;">App.java</span>
<span class="t" style="left:462px;top:38.95px;font-size:12px;line-height:18px;color:#d9b41e;-webkit-text-stroke:0.15px #d9b41e;">1</span>
<span class="t" style="left:288px;top:64.75px;font-size:12px;line-height:18px;color:#6e7399;-webkit-text-stroke:0.15px #6e7399;">src</span>
<span class="t" style="left:319.5px;top:64.75px;font-size:11.67px;line-height:18px;color:#6e7399;-webkit-text-stroke:0.15px #6e7399;">main</span>
<span class="t" style="left:359.5px;top:64.75px;font-size:11.34px;line-height:18px;color:#6e7399;letter-spacing:-0.102px;-webkit-text-stroke:0.15px #6e7399;">java</span>
<span class="t" style="left:395.8px;top:64.75px;font-size:12px;line-height:18px;color:#6e7399;letter-spacing:0.014px;-webkit-text-stroke:0.15px #6e7399;">com</span>
<span class="t" style="left:433.5px;top:64.75px;font-size:11.77px;line-height:18px;color:#6e7399;-webkit-text-stroke:0.15px #6e7399;">example</span>
<span class="t" style="left:513.3px;top:64.75px;font-size:11.69px;line-height:18px;color:#6e7399;-webkit-text-stroke:0.15px #6e7399;">App.java</span>
<span class="t" style="left:575.8px;top:64.85px;font-size:11.5px;line-height:17px;color:#e2e3ee;letter-spacing:3.013px;-webkit-text-stroke:0.15px #e2e3ee;">{}</span>
<span class="t" style="left:591.8px;top:64.75px;font-size:12px;line-height:18px;color:#6e7399;letter-spacing:-0.067px;-webkit-text-stroke:0.15px #6e7399;">com.example</span>
<span class="t" style="left:302.7px;top:82.90px;font-size:10.8px;line-height:16px;color:#f0f1f7;font-family:'Liberation Mono',monospace;-webkit-text-stroke:0.2px #f0f1f7;">1</span>
<span class="t" style="left:302.7px;top:99.10px;font-size:10.8px;line-height:16px;color:#565b7e;font-family:'Liberation Mono',monospace;-webkit-text-stroke:0.2px #565b7e;">2</span>
<span class="t" style="left:302.7px;top:115.30px;font-size:10.8px;line-height:16px;color:#565b7e;font-family:'Liberation Mono',monospace;-webkit-text-stroke:0.2px #565b7e;">3</span>
<span class="t" style="left:302.7px;top:131.50px;font-size:10.8px;line-height:16px;color:#565b7e;font-family:'Liberation Mono',monospace;-webkit-text-stroke:0.2px #565b7e;">4</span>
<span class="t" style="left:302.7px;top:147.70px;font-size:10.8px;line-height:16px;color:#565b7e;font-family:'Liberation Mono',monospace;-webkit-text-stroke:0.2px #565b7e;">5</span>
<span class="t" style="left:302.7px;top:163.90px;font-size:10.8px;line-height:16px;color:#565b7e;font-family:'Liberation Mono',monospace;-webkit-text-stroke:0.2px #565b7e;">6</span>
<span class="t" style="left:302.7px;top:180.10px;font-size:10.8px;line-height:16px;color:#565b7e;font-family:'Liberation Mono',monospace;-webkit-text-stroke:0.2px #565b7e;">7</span>
<span class="t" style="left:302.7px;top:196.30px;font-size:10.8px;line-height:16px;color:#565b7e;font-family:'Liberation Mono',monospace;-webkit-text-stroke:0.2px #565b7e;">8</span>
<span class="t" style="left:302.7px;top:212.50px;font-size:10.8px;line-height:16px;color:#565b7e;font-family:'Liberation Mono',monospace;-webkit-text-stroke:0.2px #565b7e;">9</span>
<span class="t" style="left:296.2px;top:228.70px;font-size:10.8px;line-height:16px;color:#565b7e;font-family:'Liberation Mono',monospace;-webkit-text-stroke:0.2px #565b7e;">10</span>
<span class="t" style="left:296.2px;top:258.40px;font-size:10.8px;line-height:16px;color:#565b7e;font-family:'Liberation Mono',monospace;-webkit-text-stroke:0.2px #565b7e;">11</span>
<span class="t" style="left:296.2px;top:274.60px;font-size:10.8px;line-height:16px;color:#565b7e;font-family:'Liberation Mono',monospace;-webkit-text-stroke:0.2px #565b7e;">12</span>
<span class="t" style="left:296.2px;top:290.80px;font-size:10.8px;line-height:16px;color:#565b7e;font-family:'Liberation Mono',monospace;-webkit-text-stroke:0.2px #565b7e;">13</span>
<span class="t" style="left:296.2px;top:307.00px;font-size:10.8px;line-height:16px;color:#565b7e;font-family:'Liberation Mono',monospace;-webkit-text-stroke:0.2px #565b7e;">14</span>
<span class="t" style="left:296.2px;top:323.20px;font-size:10.8px;line-height:16px;color:#565b7e;font-family:'Liberation Mono',monospace;-webkit-text-stroke:0.2px #565b7e;">15</span>
<span class="t" style="left:296.2px;top:339.40px;font-size:10.8px;line-height:16px;color:#565b7e;font-family:'Liberation Mono',monospace;-webkit-text-stroke:0.2px #565b7e;">16</span>
<span class="t" style="left:296.2px;top:355.60px;font-size:10.8px;line-height:16px;color:#565b7e;font-family:'Liberation Mono',monospace;-webkit-text-stroke:0.2px #565b7e;">17</span>
<span class="t" style="left:296.2px;top:385.30px;font-size:10.8px;line-height:16px;color:#565b7e;font-family:'Liberation Mono',monospace;-webkit-text-stroke:0.2px #565b7e;">18</span>
<span class="t" style="left:296.2px;top:401.50px;font-size:10.8px;line-height:16px;color:#565b7e;font-family:'Liberation Mono',monospace;-webkit-text-stroke:0.2px #565b7e;">19</span>
<span class="t" style="left:333.3px;top:82.90px;font-size:10.8px;line-height:16px;color:#d0a8f0;font-family:'Liberation Mono',monospace;-webkit-text-stroke:.22px #d0a8f0;">package</span>
<span class="t" style="left:378.66px;top:82.90px;font-size:10.8px;line-height:16px;color:#c698ea;font-family:'Liberation Mono',monospace;-webkit-text-stroke:.22px #c698ea;"> com.example</span>
<span class="t" style="left:456.42px;top:82.90px;font-size:10.8px;line-height:16px;color:#c9cce6;font-family:'Liberation Mono',monospace;-webkit-text-stroke:.22px #c9cce6;">;</span>
<span class="t" style="left:333.3px;top:115.30px;font-size:10.8px;line-height:16px;color:#d0a8f0;font-family:'Liberation Mono',monospace;-webkit-text-stroke:.22px #d0a8f0;">import</span>
<span class="t" style="left:372.18px;top:115.30px;font-size:10.8px;line-height:16px;color:#c698ea;font-family:'Liberation Mono',monospace;-webkit-text-stroke:.22px #c698ea;"> javafx.application.Application</span>
<span class="t" style="left:573.06px;top:115.30px;font-size:10.8px;line-height:16px;color:#c9cce6;font-family:'Liberation Mono',monospace;-webkit-text-stroke:.22px #c9cce6;">;</span>
<span class="t" style="left:333.3px;top:131.50px;font-size:10.8px;line-height:16px;color:#d0a8f0;font-family:'Liberation Mono',monospace;-webkit-text-stroke:.22px #d0a8f0;">import</span>
<span class="t" style="left:372.18px;top:131.50px;font-size:10.8px;line-height:16px;color:#c698ea;font-family:'Liberation Mono',monospace;-webkit-text-stroke:.22px #c698ea;"> javafx.fxml.FXMLLoader</span>
<span class="t" style="left:521.22px;top:131.50px;font-size:10.8px;line-height:16px;color:#c9cce6;font-family:'Liberation Mono',monospace;-webkit-text-stroke:.22px #c9cce6;">;</span>
<span class="t" style="left:333.3px;top:147.70px;font-size:10.8px;line-height:16px;color:#d0a8f0;font-family:'Liberation Mono',monospace;-webkit-text-stroke:.22px #d0a8f0;">import</span>
<span class="t" style="left:372.18px;top:147.70px;font-size:10.8px;line-height:16px;color:#c698ea;font-family:'Liberation Mono',monospace;-webkit-text-stroke:.22px #c698ea;"> javafx.scene.Parent</span>
<span class="t" style="left:501.78px;top:147.70px;font-size:10.8px;line-height:16px;color:#c9cce6;font-family:'Liberation Mono',monospace;-webkit-text-stroke:.22px #c9cce6;">;</span>
<span class="t" style="left:333.3px;top:163.90px;font-size:10.8px;line-height:16px;color:#d0a8f0;font-family:'Liberation Mono',monospace;-webkit-text-stroke:.22px #d0a8f0;">import</span>
<span class="t" style="left:372.18px;top:163.90px;font-size:10.8px;line-height:16px;color:#c698ea;font-family:'Liberation Mono',monospace;-webkit-text-stroke:.22px #c698ea;"> javafx.scene.Scene</span>
<span class="t" style="left:495.3px;top:163.90px;font-size:10.8px;line-height:16px;color:#c9cce6;font-family:'Liberation Mono',monospace;-webkit-text-stroke:.22px #c9cce6;">;</span>
<span class="t" style="left:333.3px;top:180.10px;font-size:10.8px;line-height:16px;color:#d0a8f0;font-family:'Liberation Mono',monospace;-webkit-text-stroke:.22px #d0a8f0;">import</span>
<span class="t" style="left:372.18px;top:180.10px;font-size:10.8px;line-height:16px;color:#c698ea;font-family:'Liberation Mono',monospace;-webkit-text-stroke:.22px #c698ea;"> javafx.stage.Stage</span>
<span class="t" style="left:495.3px;top:180.10px;font-size:10.8px;line-height:16px;color:#c9cce6;font-family:'Liberation Mono',monospace;-webkit-text-stroke:.22px #c9cce6;">;</span>
<span class="t" style="left:333.3px;top:212.50px;font-size:10.8px;line-height:16px;color:#d0a8f0;font-family:'Liberation Mono',monospace;-webkit-text-stroke:.22px #d0a8f0;">import</span>
<span class="t" style="left:372.18px;top:212.50px;font-size:10.8px;line-height:16px;color:#c698ea;font-family:'Liberation Mono',monospace;-webkit-text-stroke:.22px #c698ea;"> java.io.IOException</span>
<span class="t" style="left:501.78px;top:212.50px;font-size:10.8px;line-height:16px;color:#c9cce6;font-family:'Liberation Mono',monospace;-webkit-text-stroke:.22px #c9cce6;">;</span>
<span class="t" style="left:291.5px;top:424.45px;font-size:10px;line-height:15px;color:#6b6d82;-webkit-text-stroke:0.15px #6b6d82;">PLAYWRIGHT</span>
<span class="t" style="left:877px;top:424.25px;font-size:11px;line-height:16px;color:#d4d6e3;-webkit-text-stroke:0.15px #d4d6e3;">Run: </span>
<span class="t" style="left:903.5px;top:424.25px;font-size:10.39px;line-height:16px;color:#e6e7f0;-webkit-text-stroke:0.15px #e6e7f0;">App</span>
<span class="t" style="left:291.5px;top:446.60px;font-size:10.8px;line-height:16px;color:#dfe1ec;font-family:'Liberation Mono',monospace;-webkit-text-stroke:0.2px #dfe1ec;letter-spacing:-0.18px;"> /us</span>
<span class="t" style="left:890px;top:446.60px;font-size:10.8px;line-height:16px;color:#dfe1ec;font-family:'Liberation Mono',monospace;-webkit-text-stroke:0.2px #dfe1ec;letter-spacing:-0.18px;">ome/bin/java @/var/folders/1</span>
<span class="t" style="left:291.5px;top:459.20px;font-size:10.8px;line-height:16px;color:#dfe1ec;font-family:'Liberation Mono',monospace;-webkit-text-stroke:0.2px #dfe1ec;letter-spacing:-0.18px;">q/x4</span>
<span class="t" style="left:890px;top:459.20px;font-size:10.8px;line-height:16px;color:#dfe1ec;font-family:'Liberation Mono',monospace;-webkit-text-stroke:0.2px #dfe1ec;letter-spacing:-0.18px;">ple.App</span>
<span class="t" style="left:291.5px;top:471.80px;font-size:10.8px;line-height:16px;color:#dfe1ec;font-family:'Liberation Mono',monospace;-webkit-text-stroke:0.2px #dfe1ec;letter-spacing:-0.18px;">will</span>
<span class="t" style="left:890px;top:471.80px;font-size:10.8px;line-height:16px;color:#dfe1ec;font-family:'Liberation Mono',monospace;-webkit-text-stroke:0.2px #dfe1ec;letter-spacing:-0.18px;">avaVirtualMachines/openjdk-2</span>
<span class="t" style="left:291.5px;top:484.40px;font-size:10.8px;line-height:16px;color:#dfe1ec;font-family:'Liberation Mono',monospace;-webkit-text-stroke:0.2px #dfe1ec;letter-spacing:-0.18px;">3.0.</span>
<span class="t" style="left:890px;top:484.40px;font-size:10.8px;line-height:16px;color:#dfe1ec;font-family:'Liberation Mono',monospace;-webkit-text-stroke:0.2px #dfe1ec;letter-spacing:-0.18px;">zhzey7yu3vio.argfile -m com.</span>
<span class="t" style="left:291.5px;top:497.00px;font-size:10.8px;line-height:16px;color:#dfe1ec;font-family:'Liberation Mono',monospace;-webkit-text-stroke:0.2px #dfe1ec;letter-spacing:-0.18px;">exam</span>
<span class="t" style="left:291.5px;top:509.60px;font-size:10.8px;line-height:16px;color:#dfe1ec;font-family:'Liberation Mono',monospace;-webkit-text-stroke:0.2px #dfe1ec;letter-spacing:-0.18px;">Apr </span>
<span class="t" style="left:291.5px;top:522.20px;font-size:10.8px;line-height:16px;color:#dfe1ec;font-family:'Liberation Mono',monospace;-webkit-text-stroke:0.2px #dfe1ec;letter-spacing:-0.18px;">WARN</span>
<span class="t" style="left:291.5px;top:534.80px;font-size:10.8px;line-height:16px;color:#dfe1ec;font-family:'Liberation Mono',monospace;-webkit-text-stroke:0.2px #dfe1ec;letter-spacing:-0.18px;">2025</span>
<span class="t" style="left:291.5px;top:547.40px;font-size:10.8px;line-height:16px;color:#dfe1ec;font-family:'Liberation Mono',monospace;-webkit-text-stroke:0.2px #dfe1ec;letter-spacing:-0.18px;">2025</span>
<span class="t" style="left:890px;top:547.40px;font-size:10.8px;line-height:16px;color:#dfe1ec;font-family:'Liberation Mono',monospace;-webkit-text-stroke:0.2px #dfe1ec;letter-spacing:-0.18px;">_Modern</span>
<span class="t" style="left:54px;top:701.65px;font-size:12px;line-height:18px;color:#6e7399;-webkit-text-stroke:0.15px #6e7399;">0</span>
<span class="t" style="left:80px;top:701.65px;font-size:12px;line-height:18px;color:#6e7399;-webkit-text-stroke:0.15px #6e7399;">1</span>
<span class="t" style="left:143px;top:701.65px;font-size:11.34px;line-height:18px;color:#6e7399;letter-spacing:-0.247px;-webkit-text-stroke:0.15px #6e7399;">Live Share</span>
<span class="t" style="left:226.5px;top:701.65px;font-size:11.34px;line-height:18px;color:#6e7399;letter-spacing:-0.313px;-webkit-text-stroke:0.15px #6e7399;">Java: Ready</span>
<span class="t" style="left:301px;top:701.65px;font-size:11.36px;line-height:18px;color:#6e7399;-webkit-text-stroke:0.15px #6e7399;">SonarQube focus: new code</span>
<span class="t" style="left:461.5px;top:701.65px;font-size:11.34px;line-height:18px;color:#6e7399;letter-spacing:-0.065px;-webkit-text-stroke:0.15px #6e7399;">Ln 1, Col 1</span>
<span class="t" style="left:530.8px;top:701.65px;font-size:11.34px;line-height:18px;color:#6e7399;letter-spacing:-0.03px;-webkit-text-stroke:0.15px #6e7399;">Spaces: 4</span>
<span class="t" style="left:596px;top:701.65px;font-size:11.51px;line-height:18px;color:#6e7399;-webkit-text-stroke:0.15px #6e7399;">UTF-8</span>
<span class="t" style="left:643.3px;top:701.65px;font-size:11.34px;line-height:18px;color:#6e7399;letter-spacing:-0.745px;-webkit-text-stroke:0.15px #6e7399;">LF</span>
<span class="t" style="left:668.8px;top:701.85px;font-size:11.4px;line-height:17px;color:#6e7399;letter-spacing:3.591px;-webkit-text-stroke:0.15px #6e7399;">{}</span>
<span class="t" style="left:686.3px;top:701.65px;font-size:11.34px;line-height:18px;color:#6e7399;letter-spacing:-0.655px;-webkit-text-stroke:0.15px #6e7399;">Java</span>
<span class="t" style="left:748.8px;top:701.65px;font-size:11.34px;line-height:18px;color:#6e7399;letter-spacing:-0.123px;-webkit-text-stroke:0.15px #6e7399;">Supermaven</span>
<span class="t" style="left:826.7px;top:701.65px;font-size:11.34px;line-height:18px;color:#6e7399;letter-spacing:-0.218px;-webkit-text-stroke:0.15px #6e7399;">Qodo Gen</span>
<span class="t" style="left:892.5px;top:701.65px;font-size:11.53px;line-height:18px;color:#6e7399;-webkit-text-stroke:0.15px #6e7399;">859 Characters</span>
<span class="t" style="left:1002px;top:701.65px;font-size:11.48px;line-height:18px;color:#6e7399;-webkit-text-stroke:0.15px #6e7399;">Prettier</span>
</div>
<div id="wb"></div>
<div id="fx">
<div class="b" style="left:316px;top:223.2px;width:576.2px;height:457.4px;border-radius:9.5px;background:#f3f3f3;overflow:hidden;box-shadow:0 7px 20px rgba(0,0,0,.34),0 1px 3px rgba(0,0,0,.3),0 0 0 .5px rgba(0,0,0,.5)"><div class="b" style="left:0;top:0;width:577px;height:25.4px;background:#2a2a2b;border-top:.6px solid #4c4c4c"></div></div>
<div class="b" style="left:323.0px;top:230.3px;width:10.6px;height:10.6px;background:#4f4f51;border-radius:50%"></div>
<div class="b" style="left:341.09999999999997px;top:230.3px;width:10.6px;height:10.6px;background:#4f4f51;border-radius:50%"></div>
<div class="b" style="left:359.2px;top:230.3px;width:10.6px;height:10.6px;background:#4f4f51;border-radius:50%"></div>
<div class="b" style="left:532.8px;top:469.2px;width:142.6px;height:23px;background:linear-gradient(#f4f4f4,#dedede);border:1px solid #bcbcbc;border-radius:3.5px;box-shadow:0 .5px 0 rgba(255,255,255,.8)"></div>
<span class="t" style="left:572.4px;top:435.65px;font-size:11.34px;line-height:18px;color:#3b3b3b;letter-spacing:-0.263px;-webkit-text-stroke:0.15px #3b3b3b;">Primary View</span>
<span class="t" style="left:540.4px;top:472.75px;font-size:11.34px;line-height:18px;color:#3b3b3b;letter-spacing:-0.139px;-webkit-text-stroke:0.15px #3b3b3b;">Switch to Secondary View</span>
</div>
<div id="top">
<div class="badge" style="left:172.8px;top:198.8px"></div>
<svg class="b" style="left:180.9px;top:206.9px;" width="20" height="20" viewBox="-10 -10 20 20" preserveAspectRatio="none"><path d="M-5 -4.2 L-0.9 -8.2 H2.4 V8.9 H-1.4 V-3.9 L-5 -1.1Z" fill="#fff"/></svg>
<div class="badge" style="left:935.8px;top:30.3px">2</div>
<div class="badge" style="left:695.6px;top:436.1px">3</div>
</div>
</body></html>
